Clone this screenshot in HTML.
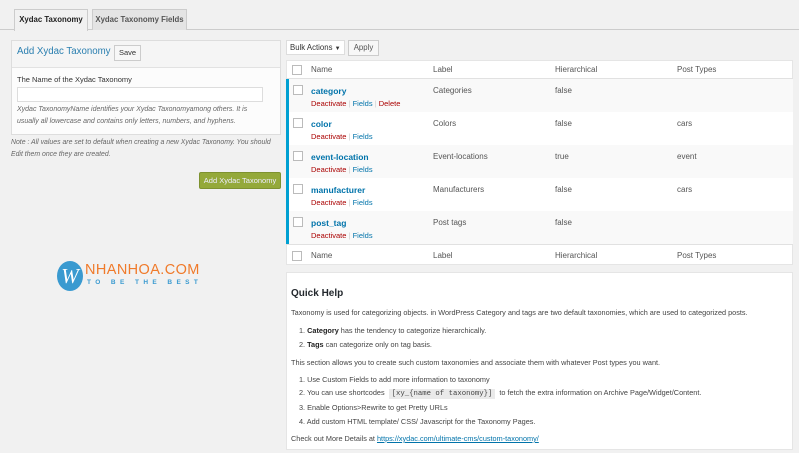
<!DOCTYPE html>
<html><head><meta charset="utf-8"><style>
*{box-sizing:border-box;margin:0;padding:0}
body{width:799px;height:453px;background:#f1f1f1;font-family:"Liberation Sans",sans-serif;color:#444;position:relative;overflow:hidden;font-size:8px}
.abs{position:absolute;white-space:nowrap}
.tab{position:absolute;top:9px;height:21px;border:1px solid #ccc;border-bottom:none;font-size:7.8px;font-weight:bold;line-height:20px;text-align:center;white-space:nowrap}
.cb{position:absolute;width:10px;height:10px;border:1px solid #bbb;background:#fff}
.row{position:absolute;left:286px;width:507px;height:33px}
.row span{position:absolute;top:7px;font-size:8px;color:#555;white-space:nowrap}
.nm{color:#0073aa!important;font-size:8.5px!important;font-weight:bold}
.act{position:absolute;left:25px;top:20px;font-size:7.5px;color:#a00;white-space:nowrap}
.act b{font-weight:normal;color:#0073aa}
.act i{font-style:normal;color:#ccc}
.h{position:absolute;font-size:8px;color:#333}
.qt{position:absolute;left:291px;font-size:7.3px;color:#444;white-space:nowrap}
</style></head><body>
<div class="abs" style="left:0;top:29px;width:799px;height:1px;background:#ccc"></div>
<div class="tab" style="left:14px;width:74px;background:#f1f1f1;color:#222;height:22px">Xydac Taxonomy</div>
<div class="tab" style="left:92px;width:95px;background:#e4e4e4;color:#555">Xydac Taxonomy Fields</div>

<div class="abs" style="left:11px;top:40px;width:270px;height:95px;border:1px solid #ddd;background:#fcfcfc"></div>
<div class="abs" style="left:12px;top:41px;width:268px;height:27px;background:#f5f5f5;border-bottom:1px solid #e2e2e2"></div>
<div class="abs" style="left:17px;top:46px;font-size:9.7px;color:#2a7fb0">Add Xydac Taxonomy</div>
<div class="abs" style="left:114px;top:45px;width:27px;height:16px;border:1px solid #ccc;background:#f7f7f7;font-size:7.5px;text-align:center;line-height:14px;color:#333">Save</div>
<div class="abs" style="left:17px;top:75px;font-size:7.5px;color:#333">The Name of the Xydac Taxonomy</div>
<div class="abs" style="left:17px;top:87px;width:246px;height:15px;border:1px solid #ddd;background:#fff"></div>
<div class="abs" style="left:17px;top:104px;font-size:7px;font-style:italic;color:#666;line-height:12px">Xydac TaxonomyName identifies your Xydac Taxonomyamong others. It is<br>usually all lowercase and contains only letters, numbers, and hyphens.</div>
<div class="abs" style="left:11px;top:137px;font-size:6.9px;font-style:italic;color:#666;line-height:12px">Note : All values are set to default when creating a new Xydac Taxonomy. You should<br>Edit them once they are created.</div>
<div class="abs" style="left:199px;top:172px;width:82px;height:17px;background:#94a93a;border:1px solid #7e9230;color:#eef;font-size:7.5px;text-align:center;line-height:15px;border-radius:2px">Add Xydac Taxonomy</div>

<div class="abs" style="left:57px;top:261px;width:26px;height:30px;border-radius:50%;background:#3a9ad0;color:#fff;font-family:'Liberation Serif',serif;font-size:21px;text-align:center;line-height:30px;font-style:italic">W</div>
<div class="abs" style="left:85px;top:262px;font-size:14.5px;color:#f07a2a;letter-spacing:.4px">NHANHOA.COM</div>
<div class="abs" style="left:87px;top:279px;font-size:6.5px;color:#3a9ad0;letter-spacing:4.4px;font-weight:bold">TO BE THE BEST</div>

<div class="abs" style="left:286px;top:40px;width:59px;height:15px;border:1px solid #ddd;background:#fff;font-size:7.8px;line-height:13px;padding-left:3px;color:#333">Bulk Actions <span style="font-size:6px">▼</span></div>
<div class="abs" style="left:348px;top:40px;width:31px;height:16px;border:1px solid #ccc;background:#f7f7f7;font-size:7.8px;line-height:14px;text-align:center;color:#555">Apply</div>

<div class="abs" style="left:286px;top:60px;width:507px;height:205px;background:#fff;border:1px solid #e5e5e5"></div>
<div class="row" style="top:60px;height:19px;border-bottom:1px solid #e1e1e1"><div class="cb" style="left:6px;top:5px"></div><span class="h" style="left:25px;top:5px">Name</span><span class="h" style="left:147px;top:5px">Label</span><span class="h" style="left:269px;top:5px">Hierarchical</span><span class="h" style="left:391px;top:5px">Post Types</span></div>

<div class="row" style="top:79px;background:#f9f9f9;border-left:3px solid #00a0d2"><div class="cb" style="left:4px;top:6px"></div><span class="nm" style="left:22px">category</span><span style="left:144px">Categories</span><span style="left:266px">false</span><div class="act" style="left:22px">Deactivate <i>|</i> <b>Fields</b> <i>|</i> Delete</div></div>
<div class="row" style="top:112px;background:#fff;border-left:3px solid #00a0d2"><div class="cb" style="left:4px;top:6px"></div><span class="nm" style="left:22px">color</span><span style="left:144px">Colors</span><span style="left:266px">false</span><span style="left:388px">cars</span><div class="act" style="left:22px">Deactivate <i>|</i> <b>Fields</b></div></div>
<div class="row" style="top:145px;background:#f9f9f9;border-left:3px solid #00a0d2"><div class="cb" style="left:4px;top:6px"></div><span class="nm" style="left:22px">event-location</span><span style="left:144px">Event-locations</span><span style="left:266px">true</span><span style="left:388px">event</span><div class="act" style="left:22px">Deactivate <i>|</i> <b>Fields</b></div></div>
<div class="row" style="top:178px;background:#fff;border-left:3px solid #00a0d2"><div class="cb" style="left:4px;top:6px"></div><span class="nm" style="left:22px">manufacturer</span><span style="left:144px">Manufacturers</span><span style="left:266px">false</span><span style="left:388px">cars</span><div class="act" style="left:22px">Deactivate <i>|</i> <b>Fields</b></div></div>
<div class="row" style="top:211px;background:#f9f9f9;border-left:3px solid #00a0d2"><div class="cb" style="left:4px;top:6px"></div><span class="nm" style="left:22px">post_tag</span><span style="left:144px">Post tags</span><span style="left:266px">false</span><div class="act" style="left:22px">Deactivate <i>|</i> <b>Fields</b></div></div>
<div class="row" style="top:244px;height:21px;border-top:1px solid #e1e1e1"><div class="cb" style="left:6px;top:6px"></div><span class="h" style="left:25px;top:6px">Name</span><span class="h" style="left:147px;top:6px">Label</span><span class="h" style="left:269px;top:6px">Hierarchical</span><span class="h" style="left:391px;top:6px">Post Types</span></div>

<div class="abs" style="left:286px;top:272px;width:507px;height:178px;background:#fff;border:1px solid #e5e5e5"></div>
<div class="abs" style="left:291px;top:288px;font-size:10px;font-weight:bold;color:#23282d">Quick Help</div>
<div class="qt" style="top:308px">Taxonomy is used for categorizing objects. in WordPress Category and tags are two default taxonomies, which are used to categorized posts.</div>
<div class="qt" style="top:326px;left:299px">1. <b style="color:#222">Category</b> has the tendency to categorize hierarchically.</div>
<div class="qt" style="top:340px;left:299px">2. <b style="color:#222">Tags</b> can categorize only on tag basis.</div>
<div class="qt" style="top:358px">This section allows you to create such custom taxonomies and associate them with whatever Post types you want.</div>
<div class="qt" style="top:375px;left:299px">1. Use Custom Fields to add more information to taxonomy</div>
<div class="qt" style="top:388px;left:299px">2. You can use shortcodes <span style="background:#eaeaea;font-family:'Liberation Mono',monospace;padding:1px 3px;margin:0 2px">[xy_{name of taxonomy}]</span> to fetch the extra information on Archive Page/Widget/Content.</div>
<div class="qt" style="top:403px;left:299px">3. Enable Options&gt;Rewrite to get Pretty URLs</div>
<div class="qt" style="top:417px;left:299px">4. Add custom HTML template/ CSS/ Javascript for the Taxonomy Pages.</div>
<div class="qt" style="top:434px">Check out More Details at <span style="color:#0073aa;text-decoration:underline">https://xydac.com/ultimate-cms/custom-taxonomy/</span></div>
</body></html>
